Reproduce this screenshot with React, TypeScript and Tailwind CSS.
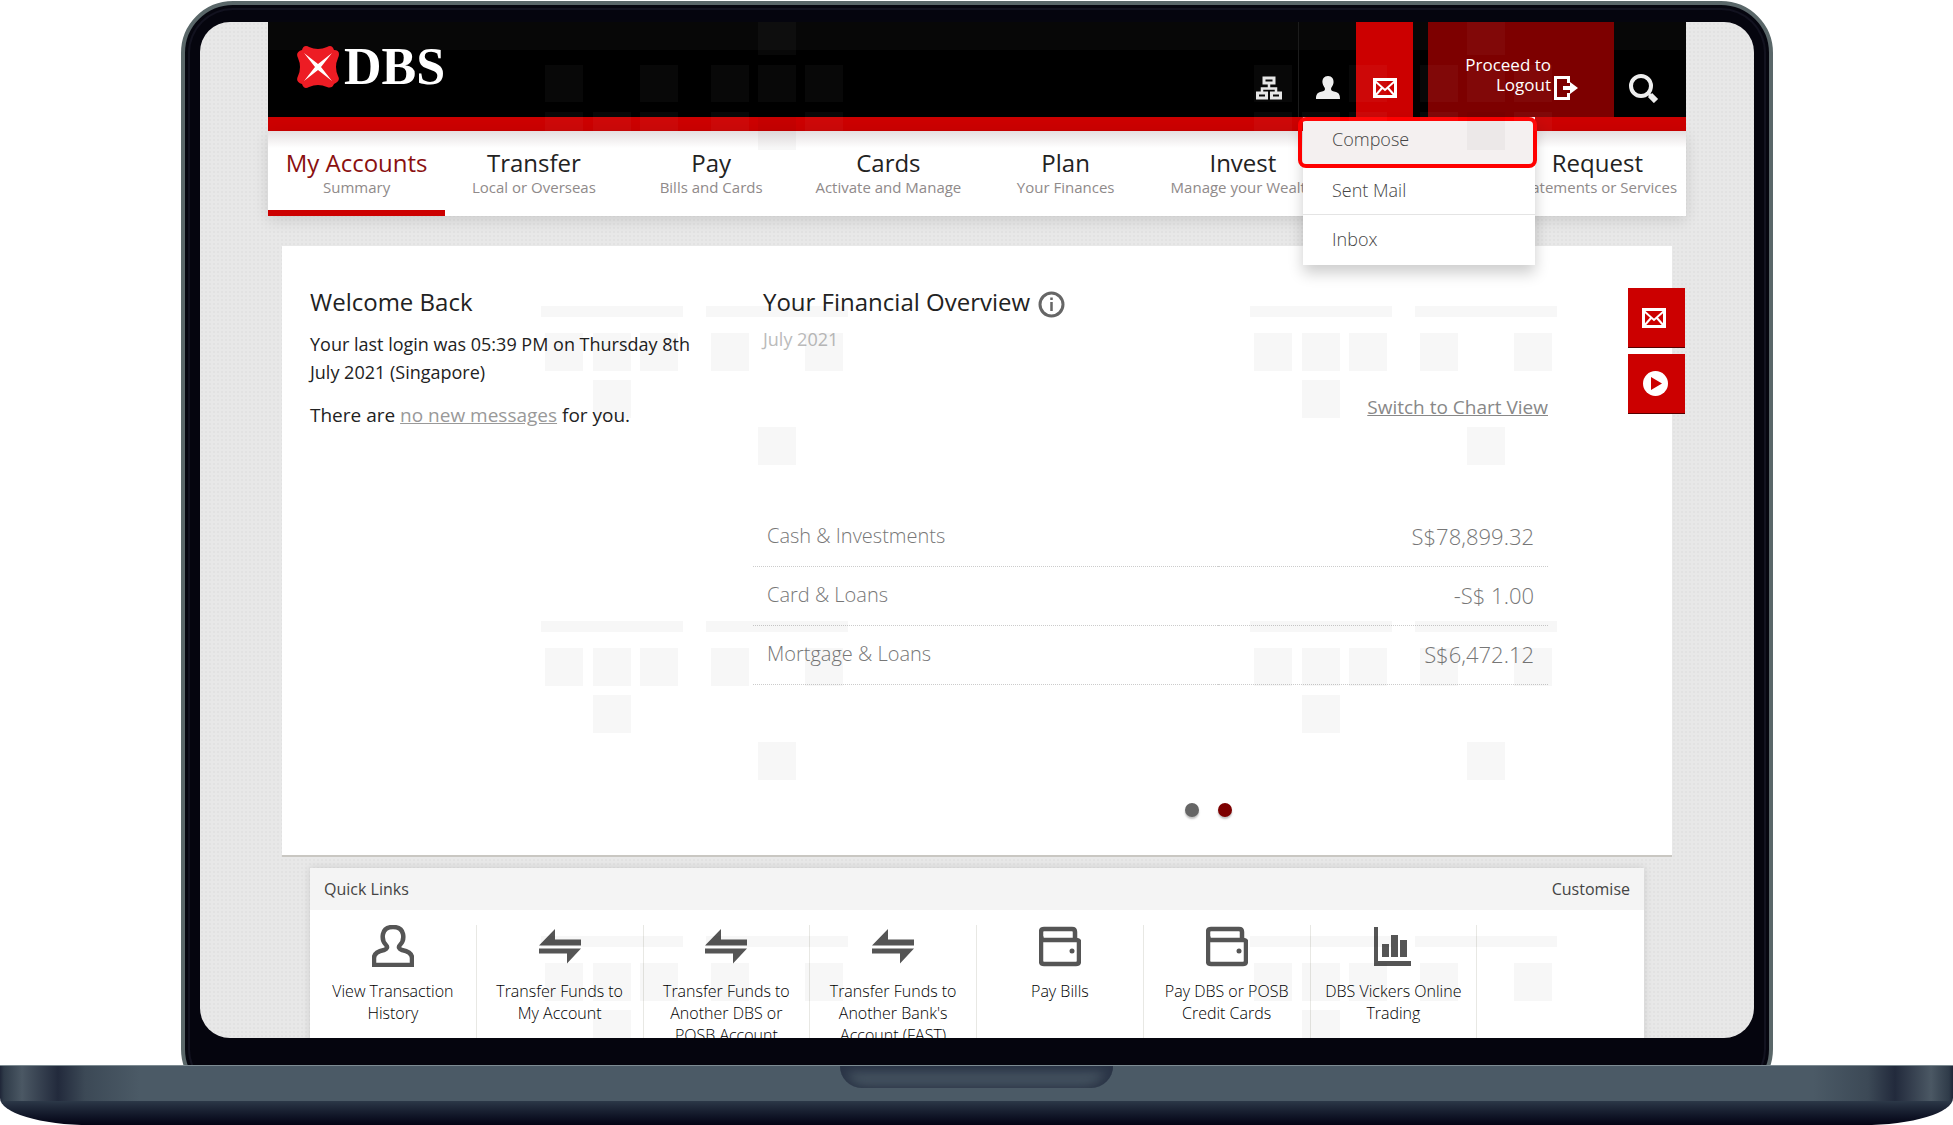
import type { ReactNode } from "react";

const navItems = [
  { title: "My Accounts", sub: "Summary", active: true },
  { title: "Transfer", sub: "Local or Overseas" },
  { title: "Pay", sub: "Bills and Cards" },
  { title: "Cards", sub: "Activate and Manage" },
  { title: "Plan", sub: "Your Finances" },
  { title: "Invest", sub: "Manage your Wealth" },
  { title: "Request", sub: "Statements or Services", last: true },
];

const balances = [
  { label: "Cash & Investments", amount: "S$78,899.32" },
  { label: "Card & Loans", amount: "-S$ 1.00" },
  { label: "Mortgage & Loans", amount: "S$6,472.12" },
];

const quickLinks: { label: string; icon: ReactNode }[] = [
  { label: "View Transaction History", icon: <PersonOutline /> },
  { label: "Transfer Funds to My Account", icon: <TransferIcon /> },
  { label: "Transfer Funds to Another DBS or POSB Account", icon: <TransferIcon /> },
  { label: "Transfer Funds to Another Bank's Account (FAST)", icon: <TransferIcon /> },
  { label: "Pay Bills", icon: <WalletIcon /> },
  { label: "Pay DBS or POSB Credit Cards", icon: <WalletIcon /> },
  { label: "DBS Vickers Online Trading", icon: <ChartIcon /> },
];

function PersonOutline() {
  return (
    <svg width="42" height="42" viewBox="0 0 42 42" fill="none" stroke="#555" strokeWidth="4.500">
      <path d="M2 40V33C2 28 7 26 12 25C15 24 16 22 14 20C11 17 10 14 11 9C12 4 16 2 21 2C26 2 30 4 31 9C32 14 31 17 28 20C26 22 27 24 30 25C35 26 40 28 40 33V40Z" />
    </svg>
  );
}

function TransferIcon() {
  return (
    <svg width="42" height="42" viewBox="0 0 42 42" fill="#555">
      <path d="M0 20.500L16 4V14.500H42V20.500Z" />
      <path d="M42 23.500L28 38.500V28.500H0V23.500Z" />
    </svg>
  );
}

function WalletIcon() {
  return (
    <svg width="42" height="42" viewBox="0 0 42 42" fill="none" stroke="#555" strokeWidth="4.500">
      <path d="M2 14V7Q2 4 5 4H33Q36 4 36 7V14" />
      <path d="M2 12V36Q2 39 5 39H37Q40 39 40 36V17Q40 15 37 15H5Q2 15 2 11" />
      <circle cx="33" cy="26" r="2.500" fill="#555" stroke="none" />
    </svg>
  );
}

function ChartIcon() {
  return (
    <svg width="42" height="42" viewBox="0 0 42 42" fill="#555">
      <path d="M2 2H6V36H39V41H2Z" />
      <path d="M10 19H17V32H10ZM19 10H26V32H19ZM28 15H35V32H28Z" />
    </svg>
  );
}

function MailIcon() {
  return (
    <svg width="24" height="20" viewBox="0 0 24 20" fill="none" stroke="#fff" strokeWidth="2">
      <rect x="1.500" y="1.500" width="21" height="17" strokeWidth="3" />
      <path d="M2 3L12 12L22 3M2 18L9 10M22 18L15 10" />
    </svg>
  );
}

function Logo() {
  return (
    <a href="#" aria-label="DBS home" className="flex items-center gap-1">
      <svg width="44" height="44" viewBox="0 0 44 44">
        <path
          d="M10 1Q12 1 13 2Q22 6 31 2Q36 -1 38 5Q43 5 43 9Q43 11 42 13Q38 22 42 31Q45 36 38 39Q36 44 31 42Q22 38 13 42Q8 45 6 39Q-1 37 2 31Q6 22 2 13Q-1 7 6 5Q7 1 10 1Z"
          fill="#ed1c24"
        />
        <path
          d="M8 8L22 19L36 8L25 22L36 36L22 25L8 36L19 22Z"
          fill="#fff"
        />
      </svg>
      <span className="font-['Liberation_Serif',serif] text-[52px] leading-[48px] font-bold text-white">
        DBS
      </span>
    </a>
  );
}

function Header() {
  return (
    <header className="flex h-[109px] justify-between border-b-[14px] border-[#c00] bg-black bg-linear-to-b from-[#070707] from-30% to-black to-30% pl-7">
      <div className="flex items-start pt-[21px]">
        <Logo />
      </div>

      <div className="flex">
        <button aria-label="Site map" className="flex w-[59px] items-end justify-center pb-[17px]">
          <svg width="26" height="24" viewBox="0 0 26 24" fill="none" stroke="#e6e6e6" strokeWidth="3">
            <rect x="8" y="2" width="10" height="5" />
            <rect x="1.500" y="17" width="9" height="5" />
            <rect x="15.500" y="17" width="9" height="5" />
            <path d="M13 8V12M6 17V12.500H20V17" strokeWidth="2.500" />
          </svg>
        </button>
        <button
          aria-label="Profile"
          className="flex w-[58px] items-end justify-center border-l border-[#1c1c1c] pb-[18px]"
        >
          <svg width="24" height="23" viewBox="0 0 24 23" fill="#eee">
            <path d="M12 0C16 0 18 3 17.500 7C17 10 15 11 15 13C15 15 17 15 20 16C23 17 24 19 24 23H0C0 19 1 17 4 16C7 15 9 15 9 13C9 11 7 10 6.500 7C6 3 8 0 12 0Z" />
          </svg>
        </button>

        <div className="relative mr-[15px] flex">
          <button
            aria-label="Mail"
            aria-expanded="true"
            className="flex w-[57px] items-end justify-center bg-[#c00] pb-[19px]"
          >
            <MailIcon />
          </button>
          <MailMenu />
        </div>

        <button className="flex w-[186px] items-end justify-end gap-[3px] bg-[#7d0000] pr-9 pb-[17px] text-right text-[17px] leading-5 text-white">
          <span className="pb-[5px]">
            Proceed to
            <br />
            Logout
          </span>
          <svg width="24" height="24" viewBox="0 0 24 24" fill="none" stroke="#fff" strokeWidth="3">
            <path d="M14.500 7V1.500H1.500V22.500H14.500V17" />
            <path d="M9 10H16V6L24 12L16 18V14H9Z" fill="#fff" stroke="none" />
          </svg>
        </button>
        <button aria-label="Search" className="flex w-[72px] items-end pb-[14px] pl-[15px]">
          <svg width="30" height="29" viewBox="0 0 30 29" fill="none" stroke="#eee">
            <circle cx="12" cy="12" r="10" strokeWidth="4" />
            <path d="M19 19L22 22" strokeWidth="3" />
            <path d="M21 21L27 27" strokeWidth="6" />
          </svg>
        </button>
      </div>
    </header>
  );
}

function MailMenu() {
  return (
    <ul className="absolute top-full -left-[53px] z-20 w-[232px] bg-white text-[18px] leading-6 font-light text-[#444] shadow-[0_8px_14px_rgba(0,0,0,0.2)]">
      <li className="relative bg-[#f4f0f0]">
        <a href="#" className="block px-[29px] pt-[10px] pb-[15px]">
          Compose
        </a>
        <span className="pointer-events-none absolute top-0 -right-[2px] -bottom-[2px] -left-[5px] rounded-lg border-4 border-[#f00]" />
      </li>
      <li className="border-b border-[#e4e4e4]">
        <a href="#" className="block px-[29px] py-3">
          Sent Mail
        </a>
      </li>
      <li>
        <a href="#" className="block px-[29px] pt-3 pb-[14px]">
          Inbox
        </a>
      </li>
    </ul>
  );
}

function MainNav() {
  return (
    <nav className="bg-white bg-linear-to-b from-[#e4dfe0] to-white to-20% shadow-[0_4px_14px_rgba(0,0,0,0.12)]">
      <ul className="grid grid-cols-8">
        {navItems.map((item) => (
          <li key={item.title} className={item.last ? "col-start-8" : ""}>
            <a
              href="#"
              className={`flex h-[85px] flex-col items-center border-b-[6px] pt-[17px] whitespace-nowrap ${
                item.active ? "border-[#c00] text-[#8a1010]" : "border-transparent text-[#222]"
              }`}
            >
              <span className="text-[24px] leading-[30px]">{item.title}</span>
              <span className="text-[15px] leading-[18px] text-[#8f8a8a]">{item.sub}</span>
            </a>
          </li>
        ))}
      </ul>
    </nav>
  );
}

function OverviewPanel() {
  return (
    <main className="relative mx-[14px] mt-[30px] flex min-h-[611px] border-b-2 border-[#c9c7c2] bg-white pt-10 pr-[124px] pl-7">
      <section className="w-[443px] shrink-0">
        <h2 className="text-[24px] leading-8 text-[#222]">Welcome Back</h2>
        <p className="mt-3 max-w-[400px] text-[18px] leading-7 text-[#222]">
          Your last login was 05:39 PM on Thursday 8th July 2021 (Singapore)
        </p>
        <p className="mt-[15px] text-[19px] leading-7 text-[#222]">
          There are{" "}
          <a href="#" className="text-[#999] underline">
            no new messages
          </a>{" "}
          for you.
        </p>
      </section>

      <section className="flex-1">
        <div className="pl-[10px]">
          <h2 className="flex items-center gap-2 text-[24px] leading-8 text-[#222]">
            Your Financial Overview
            <svg width="27" height="32" viewBox="0 0 27 32" fill="none" stroke="#666" strokeWidth="3">
              <circle cx="13.500" cy="18.500" r="11.500" />
              <path d="M13.500 16V25M13.500 11.500V14" strokeWidth="2.500" />
            </svg>
          </h2>
          <p className="mt-[7px] text-[18px] leading-7 text-[#bbb]">July 2021</p>
        </div>
        <div className="mt-10 text-right">
          <a href="#" className="text-[19px] leading-7 text-[#888] underline">
            Switch to Chart View
          </a>
        </div>
        <table className="mt-[87px] w-full leading-[56px] text-[#777]">
          <tbody>
            {balances.map((row) => (
              <tr key={row.label} className="border-b border-dotted border-[#ccc]">
                <th scope="row" className="pb-[2px] pl-[14px] text-left text-[20px] font-light">
                  {row.label}
                </th>
                <td className="pr-[14px] pb-[2px] text-right text-[22px] font-light">{row.amount}</td>
              </tr>
            ))}
          </tbody>
        </table>
        <div className="mt-[118px] flex gap-[19px] pl-[432px]">
          <button aria-label="Slide 1" className="size-[14px] rounded-full bg-[#666] shadow-[0_2px_2px_rgba(0,0,0,0.25)]" />
          <button aria-label="Slide 2" className="size-[14px] rounded-full bg-[#7d0000] shadow-[0_2px_2px_rgba(0,0,0,0.25)]" />
        </div>
      </section>

      {/* shortcuts that stick out over the right edge */}
      <div className="absolute top-[42px] -right-[13px] flex flex-col gap-[6px]">
        <button
          aria-label="Messages"
          className="flex h-[60px] w-[57px] items-center justify-center border-b border-[#500] bg-[#c00] pr-[6px]"
        >
          <MailIcon />
        </button>
        <button
          aria-label="Play video"
          className="flex h-[60px] w-[57px] items-center justify-center border-b border-[#500] bg-[#c00] pr-[2px]"
        >
          <svg width="25" height="25" viewBox="0 0 25 25">
            <circle cx="12.500" cy="12.500" r="12.500" fill="#fff" />
            <path d="M8 6L19 12.500L8 19Z" fill="#c00" />
          </svg>
        </button>
      </div>
    </main>
  );
}

function QuickLinks() {
  return (
    <section className="mx-[42px] mt-[11px] bg-white shadow-[0_0_8px_rgba(0,0,0,0.12)]">
      <div className="flex h-[42px] items-center justify-between bg-[#f4f4f4] px-[14px] text-[16px] leading-6 text-[#444]">
        <h2>Quick Links</h2>
        <a href="#">Customise</a>
      </div>
      <ul className="grid grid-cols-8 pt-[15px]">
        {quickLinks.map((link) => (
          <li key={link.label} className="h-[140px] border-r border-[#e8e8e4]">
            <a
              href="#"
              className="flex flex-col items-center gap-[13px] px-3 text-center text-[16px] leading-[22px] font-light text-black"
            >
              {link.icon}
              <span>{link.label}</span>
            </a>
          </li>
        ))}
      </ul>
    </section>
  );
}

// faint square motif laid over the whole screen
function Watermark() {
  const columns = [0, 709];
  return (
    <svg aria-hidden="true" className="pointer-events-none absolute inset-0 z-30 h-full w-full">
      {columns.map((x) => (
        <g key={x} transform={`translate(${x} 0)`}>
          <g fill="#fff" fillOpacity="0.03">
            <rect x="558" y="0" width="38" height="33" />
            {[345, 440, 511, 558, 605].map((left) => (
              <rect key={left} x={left} y="43" width="38" height="37" />
            ))}
            {[345, 393, 440, 511, 605].map((left) => (
              <rect key={left} x={left} y="90" width="38" height="19" />
            ))}
          </g>
          <g fill="#000" fillOpacity="0.03">
            <rect x="558" y="90" width="38" height="38" />
            {[284, 599, 914].map((y) => (
              <g key={y} transform={`translate(341 ${y})`}>
                <path d="M0 0H142V11H0ZM165 0H307V11H165Z" />
                <path d="M4 27H42V65H4ZM52 27H90V65H52ZM99 27H137V65H99ZM170 27H208V65H170ZM264 27H302V65H264Z" />
                <path d="M52 74H90V112H52ZM217 121H255V159H217Z" />
              </g>
            ))}
          </g>
        </g>
      ))}
    </svg>
  );
}

export default function App() {
  return (
    <div className="flex h-screen flex-col overflow-hidden bg-white pt-px font-['Open_Sans',sans-serif]">
      <div className="mr-[180px] -mb-9 ml-[181px] flex min-h-0 flex-1 flex-col rounded-[52px] border-4 border-[#5a6769] bg-[#05050e] px-[15px] pt-[17px] pb-[59px] shadow-[inset_0_0_0_3px_#06060f,inset_0_0_0_5px_#12121f]">
        <div className="relative min-h-0 flex-1 overflow-hidden rounded-[30px] bg-[#e8e8e8] bg-[radial-gradient(#e2e2e2_1px,transparent_1px)] bg-[size:4px_4px] px-[68px]">
          <Header />
          <MainNav />
          <OverviewPanel />
          <QuickLinks />
          <Watermark />
        </div>
      </div>

      <div className="relative shrink-0 overflow-hidden rounded-b-[90px_27px]">
        <div className="flex h-9 justify-center border-t border-[#7d8b92] bg-[linear-gradient(90deg,#1f2638_0,#2f3b49_4px,#4b5864_22px,#222a3c_58px,#3c4956_85px,#4b5a66_140px,#4b5a66_calc(100%-140px),#3c4956_calc(100%-85px),#222a3c_calc(100%-58px),#4b5864_calc(100%-22px),#2f3b49_calc(100%-4px),#1f2638_100%)]">
          <div className="h-[22px] w-[273px] rounded-b-[22px] bg-[#44525f] shadow-[inset_8px_4px_12px_#2a3446,inset_-8px_0_12px_#2a3446]" />
        </div>
        <div className="h-6 bg-linear-to-b from-[#2c3848] to-[#040414]" />
      </div>
    </div>
  );
}
